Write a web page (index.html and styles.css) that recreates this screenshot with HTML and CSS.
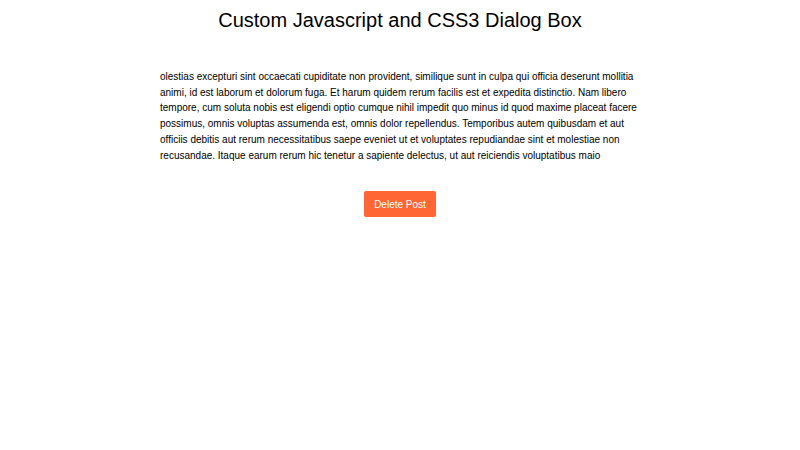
FILE: index.html
```html
<!DOCTYPE html>
<html lang="en">
<head>
  <meta charset="UTF-8" />
  <meta name="viewport" content="width=device-width, initial-scale=1.0" />
  <title>Custom Javascript and CSS3 Dialog Box</title>
  <link rel="stylesheet" href="styles.css">
</head>
<body>
  <h1>Custom Javascript and CSS3 Dialog Box</h1>

  <div class="post">
    <p>olestias excepturi sint occaecati cupiditate non provident, similique sunt in culpa qui officia deserunt mollitia animi, id est laborum et dolorum fuga. Et harum quidem rerum facilis est et expedita distinctio. Nam libero tempore, cum soluta nobis est eligendi optio cumque nihil impedit quo minus id quod maxime placeat facere possimus, omnis voluptas assumenda est, omnis dolor repellendus. Temporibus autem quibusdam et aut officiis debitis aut rerum necessitatibus saepe eveniet ut et voluptates repudiandae sint et molestiae non recusandae. Itaque earum rerum hic tenetur a sapiente delectus, ut aut reiciendis voluptatibus maio</p>
  </div>

  <div class="actions">
    <button class="btn-delete">Delete Post</button>
  </div>
</body>
</html>
```

FILE: styles.css
```css
body {
  font-family: "Liberation Sans", Arial, sans-serif;
  margin: 0;
  background: #fff;
  color: #000;
}
h1 {
  font-size: 20px;
  font-weight: normal;
  text-align: center;
  margin: 0;
  padding-top: 9px;
  line-height: 23px;
}
.post {
  width: 480px;
  margin: 37px auto 0;
}
.post p {
  font-size: 10px;
  line-height: 15.7px;
  margin: 0;
}
.actions {
  text-align: center;
  margin-top: 28px;
}
.btn-delete {
  font-family: inherit;
  font-size: 10px;
  background: #ff6633;
  color: #fff;
  border: none;
  border-radius: 2px;
  padding: 0 10px;
  height: 26px;
  cursor: pointer;
}
.btn-delete:hover {
  background: #e8552a;
}
```
